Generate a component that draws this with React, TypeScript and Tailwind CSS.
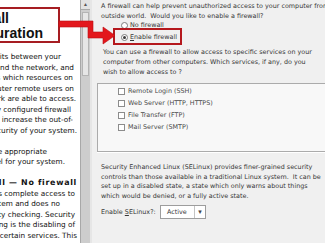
import React from 'react';

type Line = { text: string; w: string; bold?: boolean };

// guide text on the left is cut off by the window edge, so each line is anchored at its right end
const guideLines: Line[] = [
  { text: 'A firewall sits between your', w: 'w-[61px]' },
  { text: 'computer and the network, and', w: 'w-[74px]' },
  { text: 'determines which resources on', w: 'w-[73px]' },
  { text: 'your computer remote users on', w: 'w-[74px]' },
  { text: 'the network are able to access.', w: 'w-[76px]' },
  { text: 'A properly configured firewall', w: 'w-[71px]' },
  { text: 'can greatly increase the out-of-', w: 'w-[73px]' },
  { text: 'the-box security of your system.', w: 'w-[77px]' },
  { text: '', w: 'w-[10px]' },
  { text: 'Choose the appropriate', w: 'w-[47px]' },
  { text: 'security level for your system.', w: 'w-[65px]' },
  { text: '', w: 'w-[10px]' },
  { text: 'No firewall — No firewall', w: 'w-[77px]', bold: true },
  { text: 'provides complete access to', w: 'w-[75px]' },
  { text: 'your system and does no', w: 'w-[60px]' },
  { text: 'security checking. Security', w: 'w-[75px]' },
  { text: 'checking is the disabling of', w: 'w-[75px]' },
  { text: 'access to certain services. This', w: 'w-[77px]' },
];

const services = ['Remote Login (SSH)', 'Web Server (HTTP, HTTPS)', 'File Transfer (FTP)', 'Mail Server (SMTP)'];

function Mnemonic({ label }: { label: string }) {
  return (
    <span>
      <span className="underline underline-offset-[1px]">{label[0]}</span>
      {label.slice(1)}
    </span>
  );
}

function Radio({ label, checked }: { label: string; checked?: boolean }) {
  return (
    <div className="h-[12px] flex items-center gap-[2px]">
      <span className="w-[7px] h-[7px] rounded-full border border-[#7c7c7c] bg-white flex items-center justify-center">
        {checked && <span className="w-[3px] h-[3px] rounded-full bg-[#3a3a3a]" />}
      </span>
      <Mnemonic label={label} />
    </div>
  );
}

export default function App() {
  return (
    <div className="relative w-[325px] h-[243px] overflow-hidden flex bg-white">
      {/* guide page */}
      <div className="w-[80px] shrink-0 bg-white overflow-hidden font-['DejaVu_Sans',sans-serif] text-[#111]">
        <div className="mt-[7px] -ml-[20px] w-[80px] h-[36px] border-2 border-[#a61d22] bg-white pt-[2px] font-['Liberation_Sans',Arial,sans-serif] text-[14px] leading-[15px] font-bold">
          <div className="w-[27px] flex justify-end whitespace-nowrap">Firewall</div>
          <div className="w-[61px] flex justify-end whitespace-nowrap">Configuration</div>
        </div>
        <div className="mt-[9px] text-[7.3px] leading-[10.5px]">
          {guideLines.map((l, i) => (
            <div
              key={i}
              className={`${l.w} h-[10.5px] flex justify-end whitespace-nowrap ${l.bold ? 'font-bold text-[7.9px] tracking-[0.7px]' : ''}`}
            >
              {l.text}
            </div>
          ))}
        </div>
      </div>

      {/* scrollbar */}
      <div className="w-[10px] shrink-0 bg-[#cdcdcd] border-l border-[#a8a8a8] flex flex-col">
        <div className="h-[10px] bg-[#e2e2e2] border-b border-[#a8a8a8] flex items-center justify-center text-[5px] leading-none text-[#555]">▲</div>
        <div className="mt-[2px] mx-[1px] h-[64px] bg-[#e6e6e6] border border-[#b4b4b4]" />
      </div>
      <div className="w-[2px] shrink-0 bg-[#e6e6e6]" />

      {/* installer screen */}
      <div className="flex-1 min-w-0 bg-[#f0f0f0] pl-[9px] pt-[1px] text-[6.4px] leading-[10px] text-[#363636] font-['DejaVu_Sans',sans-serif]">
        <p className="whitespace-nowrap">A firewall can help prevent unauthorized access to your computer from the</p>
        <p className="whitespace-nowrap">outside world.&nbsp; Would you like to enable a firewall?</p>
        <div className="-mt-[2px] ml-[20px]">
          <Radio label="No firewall" />
          <Radio label="Enable firewall" checked />
        </div>
        <div className="mt-[4px] ml-[2px] whitespace-nowrap">
          <p>You can use a firewall to allow access to specific services on your</p>
          <p>computer from other computers. Which services, if any, do you</p>
          <p>wish to allow access to ?</p>
        </div>
        <div className="mt-[6px] -ml-[4px] -mr-[10px] h-[69px] border border-[#ababab] bg-[#f8f8f8] pt-[1px] pl-[20px] text-[#4a4a4a] shadow-[0_1px_0_#ffffff]">
          {services.map((s) => (
            <div key={s} className="h-[12px] flex items-center gap-[3px] whitespace-nowrap">
              <span className="w-[7px] h-[7px] shrink-0 border border-[#8c8c8c] bg-white" />
              {s}
            </div>
          ))}
        </div>
        <div className="mt-[11px] leading-[9.5px] whitespace-nowrap">
          <p>Security Enhanced Linux (SELinux) provides finer-grained security</p>
          <p>controls than those available in a traditional Linux system.&nbsp; It can be</p>
          <p>set up in a disabled state, a state which only warns about things</p>
          <p>which would be denied, or a fully active state.</p>
        </div>
        <div className="mt-[4px] h-[14px] flex items-center">
          <span className="w-[59px] whitespace-nowrap">
            Enable <span className="underline underline-offset-[1px]">S</span>ELinux?:
          </span>
          <div className="w-[46px] h-[14px] border border-[#9d9d9d] bg-white flex items-center">
            <span className="flex-1 pl-[6px]">Active</span>
            <span className="w-[11px] h-full border-l border-[#c4c4c4] flex items-center justify-center text-[7px] text-[#444]">▾</span>
          </div>
        </div>
      </div>

      {/* callout: highlight box and arrow */}
      <div className="absolute left-[113px] top-[28px] w-[69px] h-[17px] border-2 border-[#b5181d]" />
      <svg className="absolute inset-0 pointer-events-none" width="325" height="243" viewBox="0 0 325 243">
        <polygon
          points="59,21 93,21 93,32 103,32 103,27 115,35.5 103,44 103,38 88,38 88,27 59,27"
          fill="#e3171c"
          stroke="#b80f14"
          strokeWidth="0.6"
        />
      </svg>
    </div>
  );
}
